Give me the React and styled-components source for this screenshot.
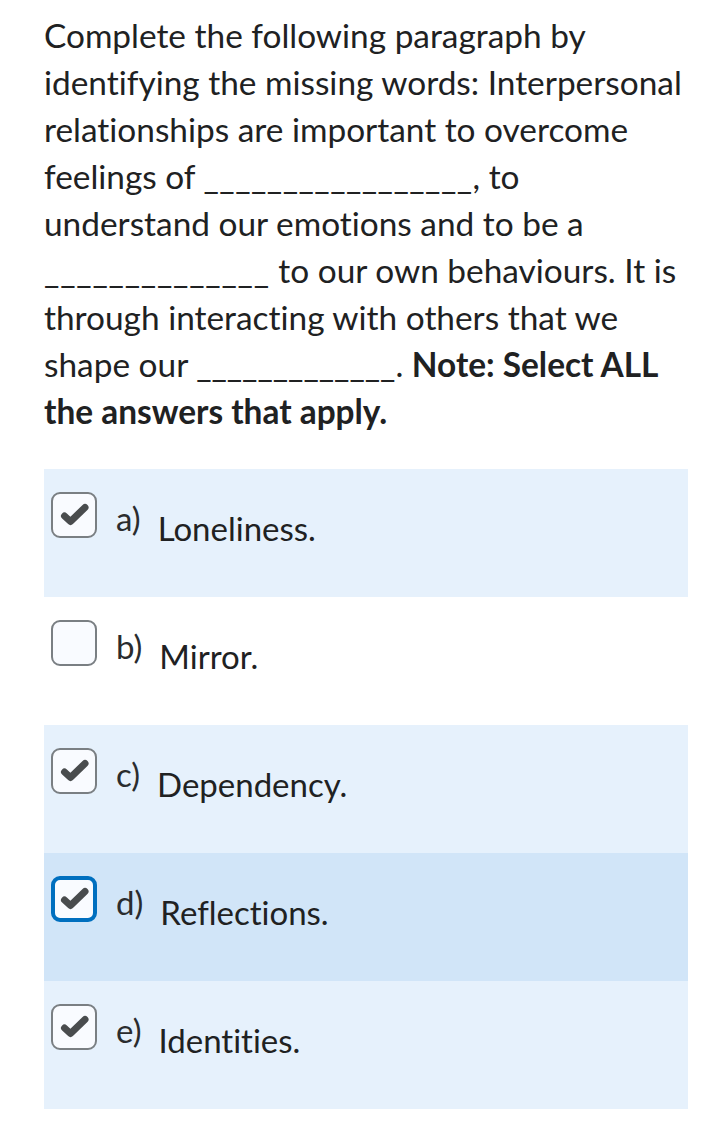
import styled, { createGlobalStyle } from "styled-components";

const GlobalStyle = createGlobalStyle`
  body {
    margin: 0;
    background: #ffffff;
    font-family: Lato, "Noto Sans", sans-serif;
    font-variant-ligatures: none;
    color: #202122;
  }
`;

const Page = styled.div`
  padding: 12px 18px 14px 44px;
`;

const Question = styled.p`
  margin: 0;
  width: 660px;
  font-size: 33.4px;
  line-height: 47px;

  strong {
    font-weight: 700;
  }
`;

// the fill-in blanks are runs of underscores, stretched a touch
const Blank = styled.span`
  letter-spacing: ${(p) => p.$spread || 0}px;
`;

const Options = styled.div`
  margin-top: 34px;
  display: flex;
  flex-direction: column;
  width: 644px;
`;

const Row = styled.div`
  display: flex;
  align-items: flex-start;
  height: 128px;
  box-sizing: border-box;
  padding: 23px 0 0 7px;
  background: ${(p) => (p.$hover ? "#d1e5f8" : p.$checked ? "#e6f1fc" : "#ffffff")};
`;

const Box = styled.span`
  flex: none;
  width: 46px;
  height: 46px;
  box-sizing: border-box;
  border-radius: 9px;
  border: ${(p) => (p.$focus ? "4px solid #006fbf" : "2px solid #7a7f83")};
  background: #f9fbff;
  display: flex;

  svg {
    width: 100%;
    height: 100%;
  }
`;

const Label = styled.div`
  margin: 6px 0 0 19px;
  font-size: 33px;
  line-height: 40px;
  color: #202122;
  white-space: nowrap;
`;

const Letter = styled.span`
  display: inline-block;
  margin-right: 17px;
  vertical-align: 10px;
  color: #2a2c2e;
`;

// check mark drawn in the 46px outer box space, cropped to the box content
const Check = ({ inset }) => (
  <svg viewBox={`${inset} ${inset} ${46 - inset * 2} ${46 - inset * 2}`}>
    <path
      d="M13.5 24 L19.5 29.5 L34 15.5"
      fill="none"
      stroke="#494c4e"
      strokeWidth="7"
      strokeLinecap="round"
      strokeLinejoin="round"
    />
  </svg>
);

const answers = [
  { letter: "a)", text: "Loneliness.", checked: true },
  { letter: "b)", text: "Mirror.", checked: false },
  { letter: "c)", text: "Dependency.", checked: true },
  { letter: "d)", text: "Reflections.", checked: true, focus: true },
  { letter: "e)", text: "Identities.", checked: true },
];

export default function App() {
  return (
    <Page>
      <GlobalStyle />
      <Question>
        Complete the following paragraph by
        <br />
        identifying the missing words: Interpersonal
        <br />
        relationships are important to overcome
        <br />
        feelings of <Blank $spread={0.5}>{"_".repeat(17)}</Blank>, to
        <br />
        understand our emotions and to be a
        <br />
        <Blank $spread={0.8}>{"_".repeat(14)}</Blank> to our own behaviours. It is
        <br />
        through interacting with others that we
        <br />
        shape our <Blank>{"_".repeat(13)}</Blank>.{" "}
        <strong>Note: Select ALL</strong>
        <br />
        <strong>the answers that apply.</strong>
      </Question>

      <Options>
        {answers.map((a) => (
          <Row key={a.letter} $checked={a.checked} $hover={a.focus}>
            <Box $focus={a.focus}>
              {a.checked && <Check inset={a.focus ? 4 : 2} />}
            </Box>
            <Label>
              <Letter>{a.letter}</Letter>
              {a.text}
            </Label>
          </Row>
        ))}
      </Options>
    </Page>
  );
}
